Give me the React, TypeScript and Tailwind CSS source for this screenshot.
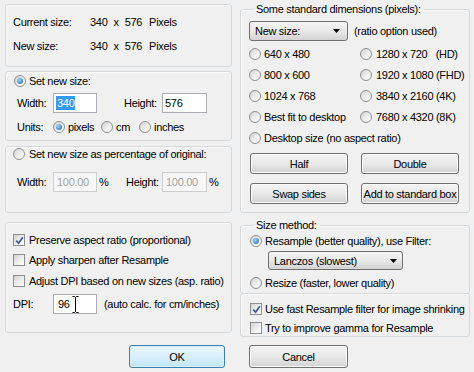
import React from 'react';

const Radio = ({ checked = false }: { checked?: boolean }) => (
  <span className="inline-flex w-[12px] h-[12px] shrink-0 rounded-full border border-[#8f8f8f] bg-linear-to-br from-[#d2d2d2] via-[#ececec] to-white items-center justify-center">
    {checked && <span className="w-[6px] h-[6px] rounded-full bg-[radial-gradient(circle_at_35%_35%,#9ad8fb,#1d5f9a)]" />}
  </span>
);

const Check = ({ checked = false }: { checked?: boolean }) => (
  <span className="inline-flex w-[12px] h-[12px] shrink-0 border border-[#8f8f8f] bg-linear-to-br from-[#d2d2d2] via-[#ececec] to-white items-center justify-center">
    {checked && (
      <svg width="9" height="9" viewBox="0 0 9 9">
        <path d="M1.2 4.6 L3.6 7.2 L7.8 1.2" stroke="#3f5a9a" strokeWidth="1.7" fill="none" />
      </svg>
    )}
  </span>
);

const Arrow = () => (
  <svg width="7" height="4" viewBox="0 0 7 4">
    <path d="M0 0 H7 L3.5 4 Z" fill="#000" />
  </svg>
);

const Btn = ({ label, className = '' }: { label: string; className?: string }) => (
  <div
    className={`flex items-center justify-center rounded-[3px] border border-[#707070] bg-linear-to-b from-[#f4f4f4] via-[#e9e9e9] to-[#d3d3d3] shadow-[inset_0_0_0_1px_#fbfbfb] ${className}`}
  >
    {label}
  </div>
);

const Row = ({ children, className = '' }: { children: React.ReactNode; className?: string }) => (
  <div className={`flex items-center h-[14px] ${className}`}>{children}</div>
);

const box = 'rounded-[3px] border border-[#d5d9dc] shadow-[inset_1px_1px_0_#fbfbfb]';
const input = 'h-[20px] border border-[#abadb3] bg-white flex items-center px-[2px]';
const disabled = 'h-[20px] border border-[#cdcdcd] bg-[#f7f7f7] text-[#a3a3a3] flex items-center px-[3px]';

export default function App() {
  return (
    <div className="w-[474px] h-[372px] bg-[#f0f0f0] overflow-hidden pt-[4px] text-[11px] leading-[14px] tracking-[-0.3px] text-black font-['Liberation_Sans',Arial,sans-serif]">
      <div className="flex items-start h-[333px] pl-[5px]">
        {/* left column */}
        <div className="w-[227px] flex flex-col">
          <div className={`${box} h-[63px] pt-[10px] pl-[7px]`}>
            <Row>
              <span className="w-[77px]">Current size:</span>
              <span>340</span>
              <span className="ml-[6px]">x</span>
              <span className="ml-[6px]">576</span>
              <span className="ml-[7px]">Pixels</span>
            </Row>
            <Row className="mt-[10px]">
              <span className="w-[77px]">New size:</span>
              <span>340</span>
              <span className="ml-[6px]">x</span>
              <span className="ml-[6px]">576</span>
              <span className="ml-[7px]">Pixels</span>
            </Row>
          </div>

          <div className={`${box} mt-[4px] h-[70px] pt-[2px]`}>
            <Row className="pl-[8px] gap-[3px]">
              <Radio checked />
              <span>Set new size:</span>
            </Row>
            <div className="flex items-center mt-[5px] pl-[11px]">
              <span className="w-[36px]">Width:</span>
              <div className={`${input} w-[44px]`}>
                <span className="bg-[#3399ff] text-white px-[1px]">340</span>
              </div>
              <span className="ml-[27px] w-[38px]">Height:</span>
              <div className={`${input} w-[45px]`}>576</div>
            </div>
            <Row className="mt-[7px] pl-[11px]">
              <span className="w-[36px]">Units:</span>
              <span className="w-[48px] flex items-center gap-[3px]">
                <Radio checked />
                pixels
              </span>
              <span className="w-[38px] flex items-center gap-[3px]">
                <Radio />
                cm
              </span>
              <span className="flex items-center gap-[3px]">
                <Radio />
                inches
              </span>
            </Row>
          </div>

          <div className={`${box} mt-[5px] h-[67px]`}>
            <Row className="pl-[7px] gap-[4px]">
              <Radio />
              <span>Set new size as percentage of original:</span>
            </Row>
            <div className="flex items-center mt-[11px] pl-[11px]">
              <span className="w-[36px]">Width:</span>
              <div className={`${disabled} w-[44px]`}>100.00</div>
              <span className="ml-[2px] w-[27px]">%</span>
              <span className="w-[36px]">Height:</span>
              <div className={`${disabled} w-[45px]`}>100.00</div>
              <span className="ml-[2px]">%</span>
            </div>
          </div>

          <div className={`${box} mt-[9px] h-[111px] pt-[10px] pl-[7px]`}>
            <Row className="gap-[4px]">
              <Check checked />
              <span>Preserve aspect ratio (proportional)</span>
            </Row>
            <Row className="gap-[4px] mt-[6px]">
              <Check />
              <span>Apply sharpen after Resample</span>
            </Row>
            <Row className="gap-[4px] mt-[7px]">
              <Check />
              <span>Adjust DPI based on new sizes (asp. ratio)</span>
            </Row>
            <div className="flex items-center mt-[6px]">
              <span className="w-[40px]">DPI:</span>
              <div className={`${input} w-[44px] relative`}>
                <span className="pl-[2px]">96</span>
                <svg className="absolute left-[18px] top-[1px]" width="7" height="17" viewBox="0 0 7 17">
                  <path d="M0.5 0.5 H2.5 L3.5 1.5 L4.5 0.5 H6.5 M3.5 1.5 V15.5 M0.5 16.5 H2.5 L3.5 15.5 L4.5 16.5 H6.5" stroke="#000" strokeWidth="1" fill="none" />
                </svg>
              </div>
              <span className="ml-[7px]">(auto calc. for cm/inches)</span>
            </div>
          </div>
        </div>

        {/* right column */}
        <div className="ml-[8px] w-[230px] flex flex-col -mt-[2px]">
          <fieldset className={`${box} h-[211px] pl-[8px]`}>
            <legend className="ml-[4px] px-[3px]">Some standard dimensions (pixels):</legend>
            <div className="flex items-center mt-[5px]">
              <div className="w-[99px] h-[20px] rounded-[3px] border border-[#707070] bg-linear-to-b from-[#f4f4f4] via-[#e9e9e9] to-[#d3d3d3] flex items-center justify-between pl-[5px] pr-[7px]">
                <span>New size:</span>
                <Arrow />
              </div>
              <span className="ml-[6px]">(ratio option used)</span>
            </div>
            <div className="mt-[2px] grid grid-cols-[111px_1fr]">
              {[
                ['640 x 480', '1280 x 720   (HD)'],
                ['800 x 600', '1920 x 1080 (FHD)'],
                ['1024 x 768', '3840 x 2160 (4K)'],
                ['Best fit to desktop', '7680 x 4320 (8K)'],
              ].map(([a, b]) => (
                <React.Fragment key={a}>
                  <div className="h-[21px] flex items-center gap-[3px]">
                    <Radio />
                    <span>{a}</span>
                  </div>
                  <div className="h-[21px] flex items-center gap-[4px]">
                    <Radio />
                    <span className="whitespace-pre">{b}</span>
                  </div>
                </React.Fragment>
              ))}
              <div className="col-span-2 h-[21px] flex items-center gap-[3px]">
                <Radio />
                <span>Desktop size (no aspect ratio)</span>
              </div>
            </div>
            <div className="flex gap-[13px] mt-[5px] pl-[1px]">
              <Btn label="Half" className="w-[98px] h-[21px]" />
              <Btn label="Double" className="w-[98px] h-[21px]" />
            </div>
            <div className="flex gap-[13px] mt-[9px] pl-[1px]">
              <Btn label="Swap sides" className="w-[98px] h-[21px]" />
              <Btn label="Add to standard box" className="w-[98px] h-[21px]" />
            </div>
          </fieldset>

          <fieldset className={`${box} mt-[5px] h-[76px] pl-[9px]`}>
            <legend className="ml-[3px] px-[3px]">Size method:</legend>
            <Row className="mt-[2px] gap-[3px]">
              <Radio checked />
              <span>Resample (better quality), use Filter:</span>
            </Row>
            <div className="ml-[18px] mt-[3px] w-[135px] h-[19px] rounded-[3px] border border-[#707070] bg-linear-to-b from-[#f4f4f4] via-[#e9e9e9] to-[#d3d3d3] flex items-center justify-between pl-[5px] pr-[5px]">
              <span>Lanczos (slowest)</span>
              <Arrow />
            </div>
            <Row className="mt-[6px] gap-[3px]">
              <Radio />
              <span>Resize (faster, lower quality)</span>
            </Row>
          </fieldset>

          <div className={`${box} -mt-[1px] h-[44px] pt-[8px] pl-[9px]`}>
            <Row className="gap-[3px]">
              <Check checked />
              <span>Use fast Resample filter for image shrinking</span>
            </Row>
            <Row className="gap-[3px] mt-[5px]">
              <Check />
              <span>Try to improve gamma for Resample</span>
            </Row>
          </div>
        </div>
      </div>

      <div className="flex mt-[8px] pl-[129px] gap-[24px]">
        <div className="w-[96px] h-[23px] flex items-center justify-center rounded-[3px] border border-[#3c7fb1] bg-linear-to-b from-[#eaf6fd] via-[#d9f0fc] to-[#bee6fd] shadow-[inset_0_0_0_1px_#d8effc]">
          OK
        </div>
        <Btn label="Cancel" className="w-[99px] h-[23px]" />
      </div>
    </div>
  );
}
